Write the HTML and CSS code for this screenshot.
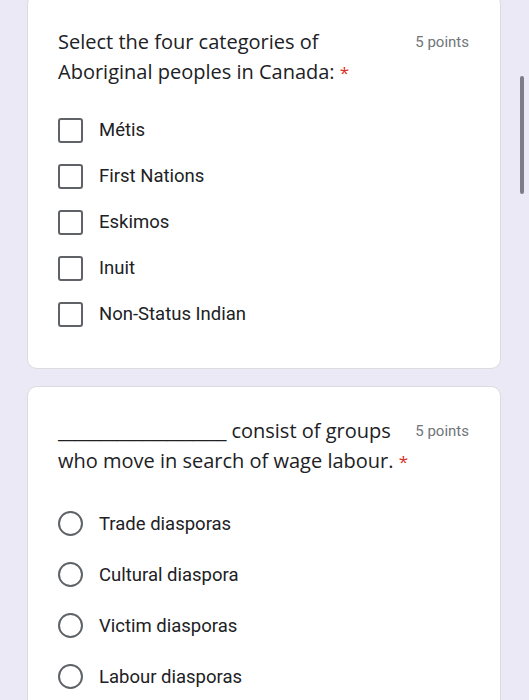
FILE: index.html
```html
<!DOCTYPE html>
<html lang="en">
<head>
<meta charset="utf-8">
<title>Form</title>
<link rel="stylesheet" href="styles.css">
</head>
<body>
<div class="page">
  <section class="card card-first">
    <div class="head">
      <div class="title">Select the four categories of Aboriginal peoples in Canada: <span class="req">*</span></div>
      <div class="points">5 points</div>
    </div>
    <ul class="options">
      <li class="option"><span class="box"></span><span class="label">Métis</span></li>
      <li class="option"><span class="box"></span><span class="label">First Nations</span></li>
      <li class="option"><span class="box"></span><span class="label">Eskimos</span></li>
      <li class="option"><span class="box"></span><span class="label">Inuit</span></li>
      <li class="option"><span class="box"></span><span class="label">Non-Status Indian</span></li>
    </ul>
  </section>
  <section class="card card-second">
    <div class="head">
      <div class="title"><span class="blank">____________________</span> consist of groups who move in search of wage labour. <span class="req">*</span></div>
      <div class="points">5 points</div>
    </div>
    <ul class="options radios">
      <li class="option"><span class="circle"></span><span class="label">Trade diasporas</span></li>
      <li class="option"><span class="circle"></span><span class="label">Cultural diaspora</span></li>
      <li class="option"><span class="circle"></span><span class="label">Victim diasporas</span></li>
      <li class="option"><span class="circle"></span><span class="label">Labour diasporas</span></li>
    </ul>
  </section>
</div>
<div class="scrollbar"></div>
</body>
</html>
```

FILE: styles.css
```css
html, body {
  margin: 0;
  padding: 0;
}
body {
  background: #ece9f7;
  font-family: Roboto, "Liberation Sans", sans-serif;
  color: #202124;
  height: 700px;
  overflow: hidden;
}
.page {
  display: flex;
  flex-direction: column;
  gap: 17px;
  padding-left: 27px;
  width: 474px;
}
.card {
  background: #ffffff;
  border: 1px solid #dadce0;
  border-radius: 10px;
  padding: 0 31px 0 30px;
}
.card-first {
  margin-top: -6px;
  padding-top: 32px;
  padding-bottom: 31px;
}
.card-second {
  padding-top: 29px;
  padding-bottom: 40px;
}
.head {
  display: flex;
  align-items: flex-start;
  gap: 3px;
}
.title {
  flex: 1;
  font-family: "Open Sans", sans-serif;
  font-size: 20px;
  line-height: 30px;
}
.blank {
  letter-spacing: -0.35px;
}
.req {
  color: #d93025;
  font-size: 17px;
  line-height: 1;
}
.points {
  font-size: 15px;
  line-height: 30px;
  color: #70757a;
  white-space: nowrap;
}
.options {
  list-style: none;
  margin: 20px 0 0;
  padding: 0;
}
.radios {
  margin-top: 22px;
}
.option {
  display: flex;
  align-items: center;
  gap: 16px;
  height: 46px;
}
.radios .option {
  height: 51px;
}
.box {
  width: 21px;
  height: 21px;
  border: 2px solid #5f6368;
  border-radius: 3px;
  flex: none;
}
.circle {
  width: 21px;
  height: 21px;
  border: 2px solid #5f6368;
  border-radius: 50%;
  flex: none;
}
.label {
  font-size: 18.5px;
}
.scrollbar {
  position: absolute;
  left: 520px;
  top: 76px;
  width: 4px;
  height: 118px;
  border-radius: 2px;
  background: #807b89;
}
```
